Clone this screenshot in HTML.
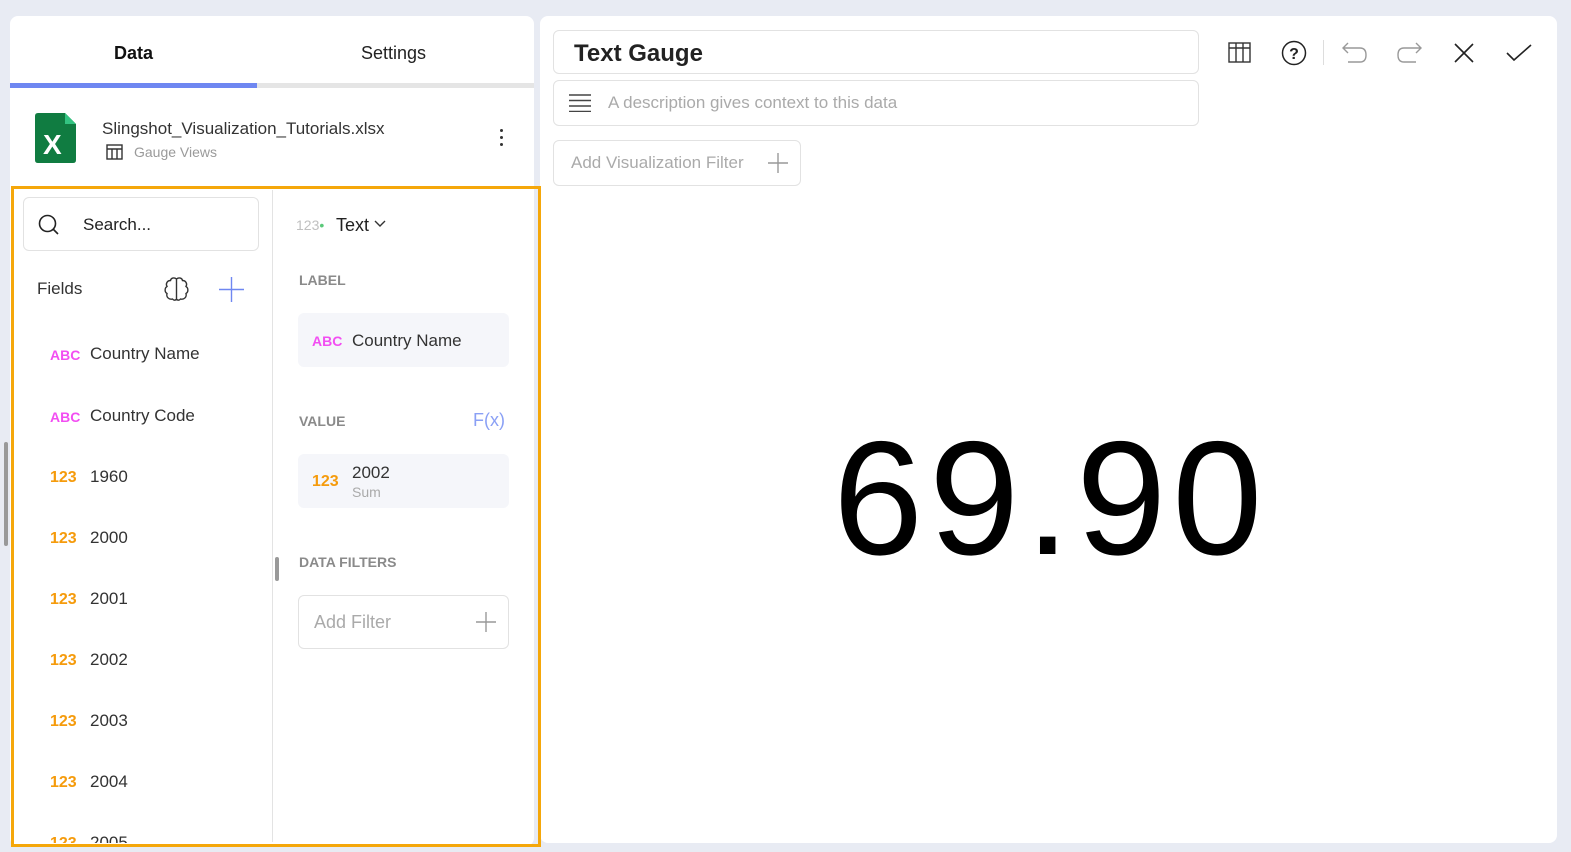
<!DOCTYPE html>
<html><head><meta charset="utf-8"><style>
*{box-sizing:border-box;margin:0;padding:0}
body{width:1571px;height:852px;background:#e8ebf3;font-family:"Liberation Sans",sans-serif;position:relative;overflow:hidden;color:#333}
.a{position:absolute}
.panel{background:#fff;border-radius:8px}
.lbl{font-size:14px;font-weight:bold;color:#8a8a8a}
.ic{font-size:14px;font-weight:bold}
.abc{color:#f24ef2}
.num{color:#f59b0c}
.fld{font-size:17px;color:#333}
</style></head><body>
<div class="a panel" style="left:10px;top:16px;width:524px;height:830px"></div>
<div class="a panel" style="left:540px;top:16px;width:1017px;height:827px"></div>

<div class="a" style="left:114px;top:43px;font-size:18px;font-weight:bold;color:#111">Data</div>
<div class="a" style="left:361px;top:43px;font-size:18px;color:#222">Settings</div>
<div class="a" style="left:10px;top:83px;width:524px;height:5px;background:#e5e5e5"></div>
<div class="a" style="left:10px;top:83px;width:247px;height:5px;background:#6f87f1"></div>

<svg class="a" style="left:35px;top:113px" width="42" height="50" viewBox="0 0 42 50"><path d="M3 0H30L41 11V47Q41 50 38 50H3Q0 50 0 47V3Q0 0 3 0Z" fill="#107c41"/><path d="M30 0L41 11H30Z" fill="#33c481"/><text x="8" y="41" font-family="Liberation Sans" font-weight="bold" font-size="28" fill="#fff">X</text></svg>
<div class="a" style="left:102px;top:119px;font-size:17px;color:#333">Slingshot_Visualization_Tutorials.xlsx</div>
<svg class="a" style="left:106px;top:144px" width="17" height="16" viewBox="0 0 17 16" fill="none" stroke="#333" stroke-width="1.4"><rect x="1" y="1" width="15" height="14"/><path d="M1 5H16M6 5V15M11 5V15"/></svg>
<div class="a" style="left:134px;top:144px;font-size:14px;color:#9a9a9a">Gauge Views</div>
<div class="a" style="left:500px;top:129px;width:3px;height:3px;background:#333;border-radius:50%;box-shadow:0 7px 0 #333,0 14px 0 #333"></div>

<div class="a" style="left:11px;top:186px;width:530px;height:661px;border:3px solid #f5a70a"></div>
<div class="a" style="left:272px;top:190px;width:1px;height:652px;background:#e3e3e3"></div>
<div class="a" style="left:4px;top:442px;width:4px;height:104px;background:#999;border-radius:2px"></div>
<div class="a" style="left:275px;top:557px;width:4px;height:24px;background:#999;border-radius:2px"></div>

<div class="a" style="left:23px;top:197px;width:236px;height:54px;border:1px solid #e2e2e2;border-radius:6px"></div>
<svg class="a" style="left:37px;top:213px" width="24" height="24" viewBox="0 0 24 24" fill="none" stroke="#222" stroke-width="1.6"><circle cx="10.5" cy="10.5" r="8"/><path d="M16.5 16.5L21 21"/></svg>
<div class="a" style="left:83px;top:215px;font-size:17px;color:#222">Search...</div>
<div class="a" style="left:37px;top:279px;font-size:17px;color:#333">Fields</div>
<svg class="a" style="left:163px;top:276px" width="27" height="26" viewBox="0 0 27 26" fill="none" stroke="#333" stroke-width="1.4"><path d="M13.5 3V23M13.5 3C11 1 8 2 7.5 4.5 4 4.5 2.5 8 4 10.5 1.5 12 1.5 16 4 17.5 3 21 6 24 9.5 23 11 25 13 24 13.5 23M13.5 3C16 1 19 2 19.5 4.5 23 4.5 24.5 8 23 10.5 25.5 12 25.5 16 23 17.5 24 21 21 24 17.5 23 16 25 14 24 13.5 23"/></svg>
<svg class="a" style="left:219px;top:277px" width="25" height="25" viewBox="0 0 25 25" stroke="#6f87f1" stroke-width="1.4"><path d="M12.5 0V25M0 12.5H25"/></svg>

<div class="a ic abc" style="left:50px;top:347px">ABC</div><div class="a fld" style="left:90px;top:344px">Country Name</div>
<div class="a ic abc" style="left:50px;top:409px">ABC</div><div class="a fld" style="left:90px;top:406px">Country Code</div>
<div class="a ic num" style="left:50px;top:469px;font-size:16px">123</div><div class="a fld" style="left:90px;top:467px">1960</div>
<div class="a ic num" style="left:50px;top:530px;font-size:16px">123</div><div class="a fld" style="left:90px;top:528px">2000</div>
<div class="a ic num" style="left:50px;top:591px;font-size:16px">123</div><div class="a fld" style="left:90px;top:589px">2001</div>
<div class="a ic num" style="left:50px;top:652px;font-size:16px">123</div><div class="a fld" style="left:90px;top:650px">2002</div>
<div class="a ic num" style="left:50px;top:713px;font-size:16px">123</div><div class="a fld" style="left:90px;top:711px">2003</div>
<div class="a ic num" style="left:50px;top:774px;font-size:16px">123</div><div class="a fld" style="left:90px;top:772px">2004</div>
<div class="a" style="left:14px;top:826px;width:256px;height:17px;overflow:hidden"><div class="a ic num" style="left:36px;top:9px;font-size:16px">123</div><div class="a fld" style="left:76px;top:7px">2005</div></div>

<div class="a" style="left:296px;top:217px;font-size:14px;color:#c0c0c0">123<span style="color:#5bc97a">•</span></div>
<div class="a" style="left:336px;top:215px;font-size:18px;color:#222">Text</div>
<svg class="a" style="left:374px;top:220px" width="12" height="8" viewBox="0 0 12 8" fill="none" stroke="#333" stroke-width="1.4"><path d="M1 1L6 6L11 1"/></svg>
<div class="a lbl" style="left:299px;top:272px">LABEL</div>
<div class="a" style="left:298px;top:313px;width:211px;height:54px;background:#f5f6fa;border-radius:6px"></div>
<div class="a ic abc" style="left:312px;top:333px">ABC</div><div class="a fld" style="left:352px;top:331px">Country Name</div>
<div class="a lbl" style="left:299px;top:413px">VALUE</div>
<div class="a" style="left:473px;top:410px;font-size:18px;color:#8aa0f5">F(x)</div>
<div class="a" style="left:298px;top:454px;width:211px;height:54px;background:#f5f6fa;border-radius:6px"></div>
<div class="a ic num" style="left:312px;top:473px;font-size:16px">123</div>
<div class="a" style="left:352px;top:463px;font-size:17px;color:#333">2002</div>
<div class="a" style="left:352px;top:484px;font-size:14px;color:#aaa">Sum</div>
<div class="a lbl" style="left:299px;top:554px">DATA FILTERS</div>
<div class="a" style="left:298px;top:595px;width:211px;height:54px;border:1px solid #e2e2e2;border-radius:6px"></div>
<div class="a" style="left:314px;top:612px;font-size:18px;color:#aaa">Add Filter</div>
<svg class="a" style="left:476px;top:612px" width="20" height="20" viewBox="0 0 20 20" stroke="#999" stroke-width="1.4"><path d="M10 0V20M0 10H20"/></svg>

<div class="a" style="left:553px;top:30px;width:646px;height:44px;border:1px solid #e2e2e2;border-radius:6px"></div>
<div class="a" style="left:574px;top:40px;font-size:24px;font-weight:bold;color:#222">Text Gauge</div>
<div class="a" style="left:553px;top:80px;width:646px;height:46px;border:1px solid #e2e2e2;border-radius:6px"></div>
<svg class="a" style="left:569px;top:94px" width="22" height="18" viewBox="0 0 22 18" stroke="#444" stroke-width="1.4"><path d="M0 1H22M0 6.5H22M0 12H22M0 17.5H22"/></svg>
<div class="a" style="left:608px;top:93px;font-size:17px;color:#aaa">A description gives context to this data</div>
<div class="a" style="left:553px;top:140px;width:248px;height:46px;border:1px solid #e2e2e2;border-radius:6px"></div>
<div class="a" style="left:571px;top:153px;font-size:17px;color:#aaa">Add Visualization Filter</div>
<svg class="a" style="left:768px;top:153px" width="20" height="20" viewBox="0 0 20 20" stroke="#999" stroke-width="1.4"><path d="M10 0V20M0 10H20"/></svg>

<svg class="a" style="left:1228px;top:42px" width="23" height="21" viewBox="0 0 23 21" fill="none" stroke="#333" stroke-width="1.4"><rect x="1" y="1" width="21" height="19"/><path d="M1 6H22M8 1V20M15 1V20"/></svg>
<svg class="a" style="left:1281px;top:40px" width="26" height="26" viewBox="0 0 26 26" fill="none" stroke="#222" stroke-width="1.5"><circle cx="13" cy="13" r="11.5"/><text x="13" y="19" font-family="Liberation Sans" font-size="16" font-weight="bold" fill="#222" stroke="none" text-anchor="middle">?</text></svg>
<div class="a" style="left:1323px;top:40px;width:1px;height:25px;background:#ddd"></div>
<svg class="a" style="left:1342px;top:41px" width="26" height="24" viewBox="0 0 26 24" fill="none" stroke="#999" stroke-width="1.4"><path d="M6 2L1 7L6 12M1 7H18Q24 7 24 14Q24 21 18 21H6"/></svg>
<svg class="a" style="left:1396px;top:41px" width="26" height="24" viewBox="0 0 26 24" fill="none" stroke="#999" stroke-width="1.4"><path d="M20 2L25 7L20 12M25 7H8Q2 7 2 14Q2 21 8 21H20"/></svg>
<svg class="a" style="left:1454px;top:43px" width="20" height="20" viewBox="0 0 20 20" stroke="#222" stroke-width="1.6"><path d="M1 1L19 19M19 1L1 19"/></svg>
<svg class="a" style="left:1506px;top:44px" width="26" height="18" viewBox="0 0 26 18" fill="none" stroke="#222" stroke-width="1.6"><path d="M1 9L8 16L25 1"/></svg>

<div class="a" style="left:833px;top:418px;font-size:162px;line-height:1;color:#000;letter-spacing:6px;font-family:'Liberation Sans',sans-serif">69.90</div>
</body></html>
